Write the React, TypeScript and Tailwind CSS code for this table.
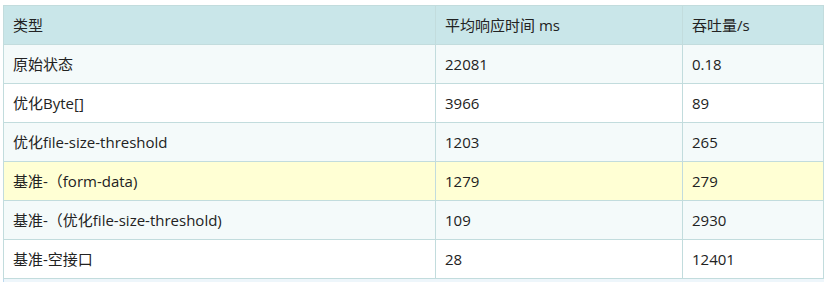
import React from 'react';

const rows = [
  { name: '原始状态', avg: '22081', tps: '0.18' },
  { name: '优化Byte[]', avg: '3966', tps: '89' },
  { name: '优化file-size-threshold', avg: '1203', tps: '265' },
  { name: '基准-（form-data)', avg: '1279', tps: '279', highlight: true },
  { name: '基准-（优化file-size-threshold)', avg: '109', tps: '2930' },
  { name: '基准-空接口', avg: '28', tps: '12401' },
];

const font = { fontFamily: '"Open Sans", "Noto Sans CJK SC", sans-serif' };

const App: React.FC = () => {
  return (
    <div className="w-[831px] h-[282px] bg-white overflow-hidden pt-[5px] pl-[3px]" style={font}>
      <table className="w-[821px] border-collapse table-fixed text-[15px] text-[#222]">
        <colgroup>
          <col className="w-[432px]" />
          <col className="w-[247px]" />
          <col />
        </colgroup>
        <thead>
          <tr className="bg-[#c9e6e9] h-[39px]">
            <th className="border border-[#c2dcdd] px-[9px] text-left font-normal">类型</th>
            <th className="border border-[#c2dcdd] px-[9px] text-left font-normal">平均响应时间 ms</th>
            <th className="border border-[#c2dcdd] px-[9px] text-left font-normal">吞吐量/s</th>
          </tr>
        </thead>
        <tbody>
          {rows.map((r, i) => (
            <tr
              key={r.name}
              className={`h-[39px] ${r.highlight ? 'bg-[#ffffd4]' : i % 2 === 0 ? 'bg-[#f4fafa]' : 'bg-white'}`}
            >
              <td className="border border-[#c2dcdd] px-[9px]">{r.name}</td>
              <td className="border border-[#c2dcdd] px-[9px]">{r.avg}</td>
              <td className="border border-[#c2dcdd] px-[9px]">{r.tps}</td>
            </tr>
          ))}
        </tbody>
      </table>
      <div className="w-[821px] h-[6px] bg-[#eef6fb] border-l border-[#bcd8ee]" />
    </div>
  );
};

export default App;
